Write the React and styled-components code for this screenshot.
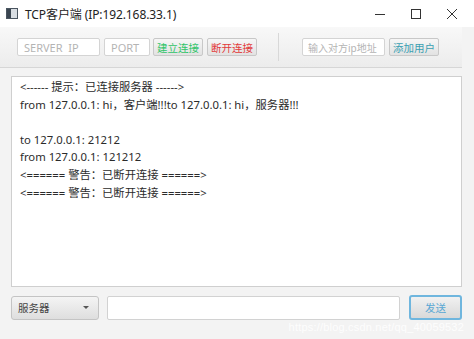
import React, { Component } from "react";
import styled, { createGlobalStyle } from "styled-components";

const Global = createGlobalStyle`
  html, body { margin: 0; padding: 0; }
  body {
    width: 474px;
    height: 339px;
    overflow: hidden;
    background: #f3f3f3;
    font-family: "Noto Sans", "Noto Sans CJK SC", sans-serif;
  }
`;

const Window = styled.div`
  width: 474px;
  height: 339px;
  display: flex;
  flex-direction: column;
  position: relative;
`;

const TitleBar = styled.div`
  height: 27px;
  background: #fff;
  display: flex;
  align-items: center;
  padding: 0 4px 0 6px;
  font-size: 12px;
  color: #222;
`;

const AppIcon = styled.div`
  width: 10px;
  height: 9px;
  border: 1px solid #4a5560;
  background: linear-gradient(90deg, #3a4550 45%, #d8dde2 45%);
  margin-right: 7px;
`;

const TitleText = styled.span`
  flex: 1;
  letter-spacing: -0.1px;
`;

const WinBtn = styled.div`
  width: 36px;
  height: 27px;
  display: flex;
  align-items: center;
  justify-content: center;
  color: #333;
`;

const Toolbar = styled.div`
  height: 40px;
  margin-right: 12px;
  background: linear-gradient(#f8f8f8, #ececec);
  border-bottom: 1px solid #d6d6d6;
  display: flex;
  align-items: center;
  padding-left: 17px;
`;

const Field = styled.div`
  width: ${(p) => p.w}px;
  height: 18px;
  box-sizing: border-box;
  background: #fff;
  border: 1px solid #d4d4d4;
  border-radius: 2px;
  font-size: ${(p) => (p.cjk ? 10 : 11)}px;
  color: #b4b4b4;
  display: flex;
  align-items: center;
  padding-left: ${(p) => (p.cjk ? 5 : 6)}px;
  margin-right: ${(p) => p.mr || 0}px;
  white-space: nowrap;
  overflow: hidden;
`;

const ToolButton = styled.div`
  width: 50px;
  height: 18px;
  box-sizing: border-box;
  border: 1px solid #c8c8c8;
  border-radius: 2px;
  background: linear-gradient(#f6f6f6, #e2e2e2);
  font-size: 10.5px;
  color: ${(p) => p.color};
  display: flex;
  align-items: center;
  justify-content: center;
  margin-right: ${(p) => p.mr || 0}px;
  white-space: nowrap;
`;

const Separator = styled.div`
  width: 1px;
  height: 28px;
  background: #d8d8d8;
  margin: 0 23px 0 21px;
`;

const Log = styled.div`
  margin: 8px 12px 0 11px;
  height: 211px;
  box-sizing: border-box;
  background: #fff;
  border: 1px solid #cfcfcf;
  padding: 1px 0 0 8px;
  font-size: 11.3px;
  line-height: 17.6px;
  color: #2b2b2b;
`;

const Line = styled.div`
  min-height: 17.6px;
  white-space: nowrap;
`;

const Bottom = styled.div`
  display: flex;
  align-items: center;
  margin: 8px 12px 0 11px;
  height: 25px;
`;

const Combo = styled.div`
  width: 88px;
  height: 24px;
  box-sizing: border-box;
  border: 1px solid #c4c4c4;
  border-radius: 3px;
  background: linear-gradient(#f4f4f4, #dedede);
  display: flex;
  align-items: center;
  justify-content: space-between;
  padding: 0 9px 0 6px;
  font-size: 10.5px;
  color: #444;
  margin-right: 8px;
`;

const Arrow = styled.div`
  width: 0;
  height: 0;
  border-left: 3px solid transparent;
  border-right: 3px solid transparent;
  border-top: 3px solid #555;
`;

const MsgInput = styled.div`
  width: 293px;
  height: 24px;
  box-sizing: border-box;
  background: #fff;
  border: 1px solid #d2d2d2;
  border-radius: 2px;
  margin-right: 9px;
`;

const SendButton = styled.div`
  width: 53px;
  height: 25px;
  box-sizing: border-box;
  border: 2px solid #6fb6de;
  border-radius: 3px;
  background: linear-gradient(#f1f1f1, #d9d9d9);
  color: #5aa8d4;
  font-size: 10.5px;
  display: flex;
  align-items: center;
  justify-content: center;
`;

const Watermark = styled.div`
  position: absolute;
  right: 10px;
  bottom: 6px;
  font-family: "Liberation Sans", sans-serif;
  font-size: 11px;
  color: rgba(255, 255, 255, 0.85);
  letter-spacing: 0.2px;
`;

const lines = [
  "<------ 提示：已连接服务器 ------>",
  "from 127.0.0.1: hi，客户端!!!to 127.0.0.1: hi，服务器!!!",
  "",
  "to 127.0.0.1: 21212",
  "from 127.0.0.1: 121212",
  "<====== 警告：已断开连接 ======>",
  "<====== 警告：已断开连接 ======>",
];

export default class App extends Component {
  render() {
    return (
      <Window>
        <Global />
        <TitleBar>
          <AppIcon />
          <TitleText>TCP客户端 (IP:192.168.33.1)</TitleText>
          <WinBtn>
            <svg width="10" height="10" viewBox="0 0 10 10">
              <path d="M0 5.5h10" stroke="#333" strokeWidth="1" />
            </svg>
          </WinBtn>
          <WinBtn>
            <svg width="10" height="10" viewBox="0 0 10 10">
              <rect x="0.5" y="0.5" width="9" height="9" fill="none" stroke="#333" strokeWidth="1" />
            </svg>
          </WinBtn>
          <WinBtn>
            <svg width="10" height="10" viewBox="0 0 10 10">
              <path d="M0 0L10 10M10 0L0 10" stroke="#333" strokeWidth="1" />
            </svg>
          </WinBtn>
        </TitleBar>
        <Toolbar>
          <Field w={83} mr={4}>SERVER&nbsp; IP</Field>
          <Field w={46} mr={3}>PORT</Field>
          <ToolButton color="#2fc468" mr={4}>建立连接</ToolButton>
          <ToolButton color="#e23a3a">断开连接</ToolButton>
          <Separator />
          <Field w={83} mr={4} cjk>输入对方ip地址</Field>
          <ToolButton color="#3a9fb2">添加用户</ToolButton>
        </Toolbar>
        <Log>
          {lines.map((l, i) => (
            <Line key={i}>{l}</Line>
          ))}
        </Log>
        <Bottom>
          <Combo>
            服务器
            <Arrow />
          </Combo>
          <MsgInput />
          <SendButton>发送</SendButton>
        </Bottom>
        <Watermark>https://blog.csdn.net/qq_40059532</Watermark>
      </Window>
    );
  }
}
